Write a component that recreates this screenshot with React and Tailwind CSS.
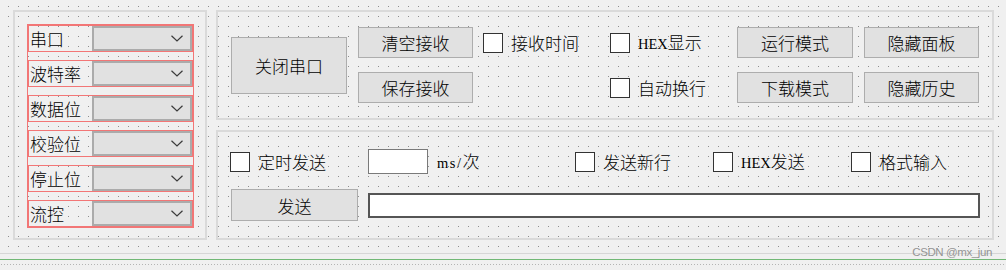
import React from "react";

const Latin = ({ children, className = "" }) => (
  <span className={"font-['Liberation_Serif',serif] font-normal text-[14.5px] " + className}>{children}</span>
);

const Btn = ({ className = "", children }) => (
  <div
    className={
      "flex items-center justify-center bg-[#e1e1e1] border border-[#adadad] text-[17px] leading-none text-black " +
      className
    }
  >
    {children}
  </div>
);

const Check = ({ className = "", children }) => (
  <div className={"flex items-center gap-[8px] " + className}>
    <span className="w-[20px] h-[20px] shrink-0 border border-[#333333] bg-white" />
    <span className="text-[17px] leading-none text-black whitespace-nowrap">{children}</span>
  </div>
);

const Combo = () => (
  <div className="flex-1 h-full bg-[#e1e1e1] border-2 border-[#ababab] flex items-center justify-end pr-[7px]">
    <svg width="12" height="7" viewBox="0 0 12 7">
      <polyline points="0.5,0.8 6,6 11.5,0.8" fill="none" stroke="#3a3a3a" strokeWidth="1.2" />
    </svg>
  </div>
);

const Row = ({ label }) => (
  <div className="h-[27px] border border-[#f27676] flex">
    <div className="w-[63px] pl-px flex items-center text-[17px] leading-none text-black whitespace-nowrap">
      {label}
    </div>
    <Combo />
  </div>
);

export default function App() {
  return (
    <div className="relative w-[1006px] h-[270px] overflow-hidden bg-[#f0f0f0] font-['Noto_Sans_CJK_SC',sans-serif] font-light flex flex-col">
      <div className="h-[253px] flex pt-[10px] pl-[13px] gap-[9px] bg-[image:conic-gradient(at_1px_1px,transparent_75%,#8e8e8e_0)] bg-[length:10px_10px] bg-[position:8px_6px]">
        {/* left group */}
        <div className="w-[194px] h-[230px] border-2 border-[#dadada] p-[12px]">
          <div className="w-[167px] border border-[#f27676] flex flex-col gap-[8px]">
            <Row label="串口" />
            <Row label="波特率" />
            <Row label="数据位" />
            <Row label="校验位" />
            <Row label="停止位" />
            <Row label="流控" />
          </div>
        </div>

        {/* right column */}
        <div className="flex flex-col gap-[10px]">
          <div className="w-[778px] h-[110px] border-2 border-[#dadada] flex items-center pl-[13px]">
            <Btn className="w-[116px] h-[57px]">关闭串口</Btn>
            <div className="ml-[11px] grid grid-cols-[125px_127px_127px_127px_115px] grid-rows-[31px_31px] gap-y-[14px] items-center">
              <Btn className="w-[115px] h-[31px]">清空接收</Btn>
              <Check>接收时间</Check>
              <Check>
                <Latin>HEX</Latin>显示
              </Check>
              <Btn className="w-[116px] h-[31px]">运行模式</Btn>
              <Btn className="w-[115px] h-[31px]">隐藏面板</Btn>
              <Btn className="w-[115px] h-[31px]">保存接收</Btn>
              <div />
              <Check>自动换行</Check>
              <Btn className="w-[116px] h-[31px]">下载模式</Btn>
              <Btn className="w-[115px] h-[31px]">隐藏历史</Btn>
            </div>
          </div>

          <div className="w-[778px] h-[110px] border-2 border-[#dadada] flex flex-col justify-center pl-[12px] gap-[15px]">
            <div className="flex items-center h-[25px]">
              <Check className="w-[138px]">定时发送</Check>
              <div className="w-[60px] h-[25px] bg-white border border-[#7a7a7a]" />
              <div className="w-[147px] pl-[9px] text-[17px] leading-none text-black whitespace-nowrap">
                <Latin className="tracking-[1.5px]">ms/</Latin>次
              </div>
              <Check className="w-[138px]">发送新行</Check>
              <Check className="w-[138px]">
                <Latin>HEX</Latin>发送
              </Check>
              <Check>格式输入</Check>
            </div>
            <div className="flex items-center h-[32px]">
              <Btn className="ml-px w-[127px] h-[32px]">发送</Btn>
              <div className="ml-[10px] w-[612px] h-[25px] bg-white border-2 border-[#555555]" />
            </div>
          </div>
        </div>
      </div>

      {/* bottom lines */}
      <div className="h-px bg-[#d6d6d6]" />
      <div className="h-[5px]" />
      <div className="h-px bg-[#72b876]" />
      <div className="h-[4px]" />
      <div className="h-px bg-[image:linear-gradient(to_right,#b4b4b4_1px,transparent_1px)] bg-[length:3px_1px] bg-[position:1px_0]" />

      <div className="absolute top-[247px] right-[14px] text-[11.5px] leading-none text-[#949494] font-['Liberation_Sans',sans-serif] font-normal tracking-[-0.4px]">
        CSDN @mx_jun
      </div>
    </div>
  );
}
